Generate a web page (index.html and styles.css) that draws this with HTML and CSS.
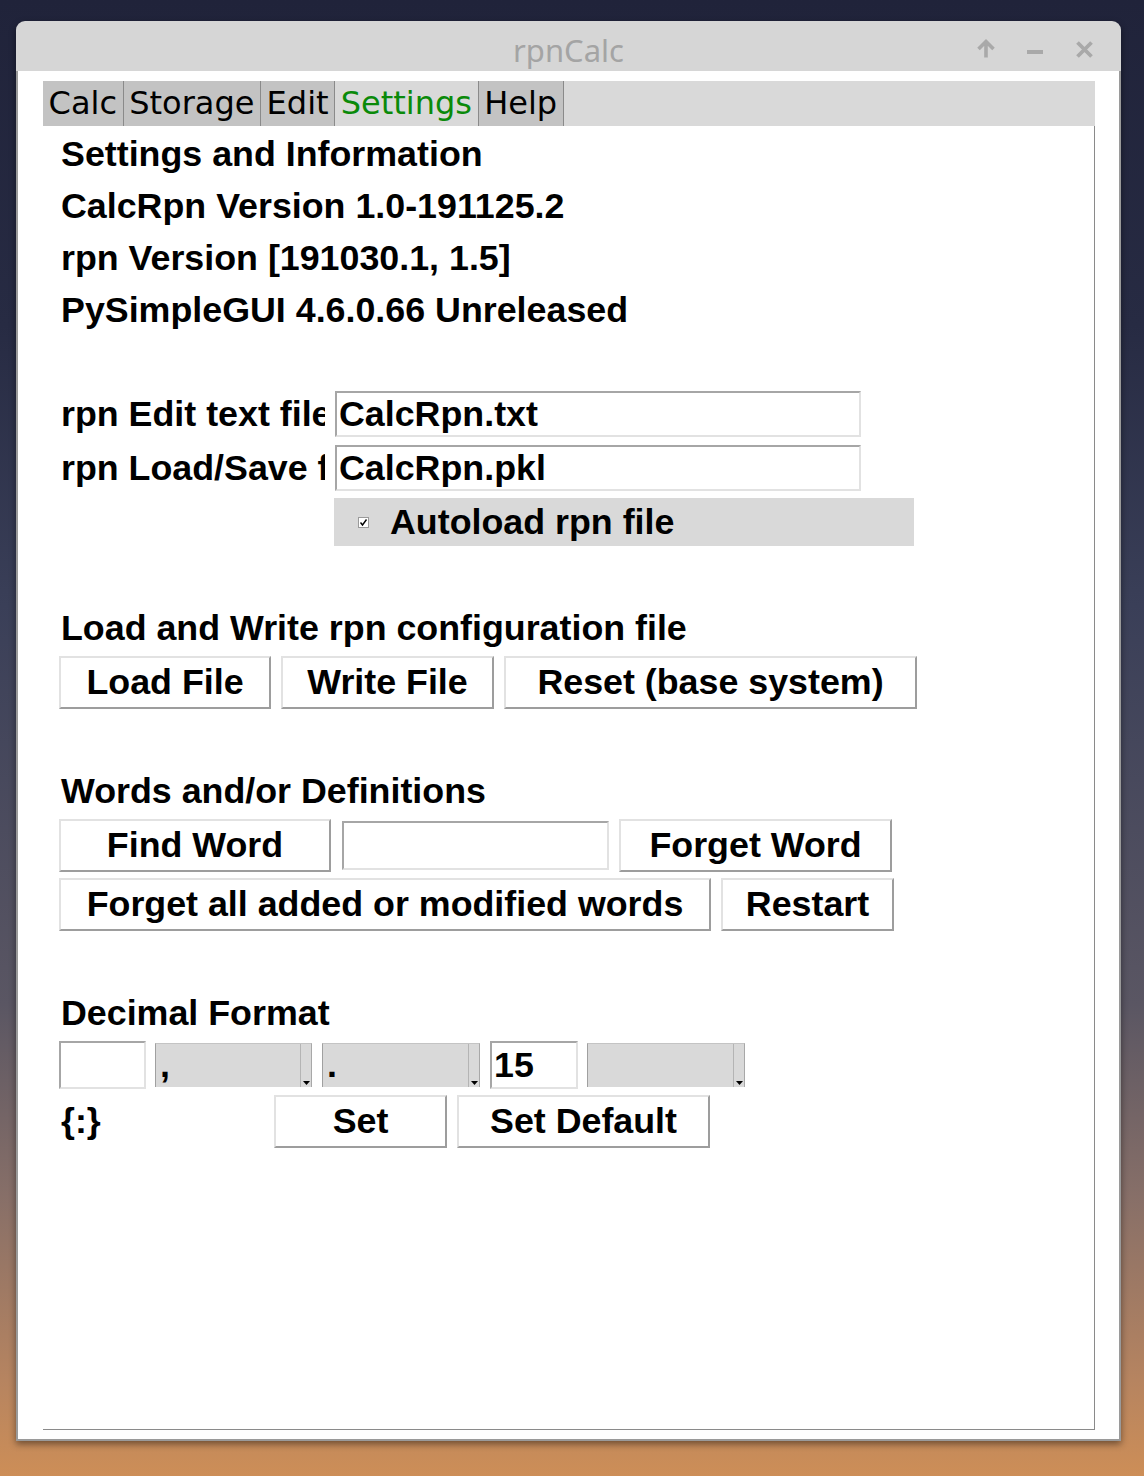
FILE: index.html
```html
<!DOCTYPE html>
<html>
<head>
<meta charset="utf-8">
<title>rpnCalc</title>
<link rel="stylesheet" href="styles.css">
</head>
<body>
<div class="window">
  <div class="titlebar">
    <div class="tb-left"></div>
    <div class="title">rpnCalc</div>
    <div class="controls">
      <span class="ctl"><svg width="49" height="50" viewBox="0 0 49 50"><path d="M25 36.5V20.5M17.5 28L25 20.5L32.5 28" fill="none" stroke="#a9a9a9" stroke-width="3.6"/></svg></span>
      <span class="ctl"><svg width="49" height="50" viewBox="0 0 49 50"><path d="M17 31H33" fill="none" stroke="#a9a9a9" stroke-width="4"/></svg></span>
      <span class="ctl"><svg width="49" height="50" viewBox="0 0 49 50"><path d="M18.5 21.5L32.5 35.5M32.5 21.5L18.5 35.5" fill="none" stroke="#a9a9a9" stroke-width="3.8"/></svg></span>
    </div>
  </div>
  <div class="client">
    <div class="tabs">
      <div class="tab">Calc</div>
      <div class="tab">Storage</div>
      <div class="tab">Edit</div>
      <div class="tab active">Settings</div>
      <div class="tab">Help</div>
    </div>
    <div class="panel">
      <div class="line">Settings and Information</div>
      <div class="line">CalcRpn Version 1.0-191125.2</div>
      <div class="line">rpn Version [191030.1, 1.5]</div>
      <div class="line">PySimpleGUI 4.6.0.66 Unreleased</div>
      <div class="spacer"></div>

      <div class="row field-row">
        <div class="flabel">rpn Edit text file</div>
        <div class="entry file-entry">CalcRpn.txt</div>
      </div>
      <div class="row field-row">
        <div class="flabel">rpn Load/Save file</div>
        <div class="entry file-entry">CalcRpn.pkl</div>
      </div>
      <div class="check-row">
        <svg class="cbox" width="11" height="11" viewBox="0 0 11 11"><rect x="0.5" y="0.5" width="10" height="10" fill="#fff" stroke="#9a9a9a"/><path d="M2.5 5.5L4.5 8L8.5 2.5" fill="none" stroke="#000" stroke-width="1.4"/></svg>
        <span class="check-text">Autoload rpn file</span>
      </div>
      <div class="spacer"></div>

      <div class="line">Load and Write rpn configuration file</div>
      <div class="row btn-row">
        <div class="btn w-load">Load File</div>
        <div class="btn w-write">Write File</div>
        <div class="btn w-reset">Reset (base system)</div>
      </div>
      <div class="spacer"></div>

      <div class="line">Words and/or Definitions</div>
      <div class="row btn-row">
        <div class="btn w-find">Find Word</div>
        <div class="entry word-entry"></div>
        <div class="btn w-forget">Forget Word</div>
      </div>
      <div class="row btn-row second">
        <div class="btn w-forgetall">Forget all added or modified words</div>
        <div class="btn w-restart">Restart</div>
      </div>
      <div class="spacer"></div>

      <div class="line">Decimal Format</div>
      <div class="row dec-row">
        <div class="entry small-entry e1"></div>
        <div class="combo c1"><span class="combo-text">,</span><span class="combo-arrow"><svg width="7" height="4" viewBox="0 0 7 4"><path d="M0 0H7L3.5 4Z" fill="#000"/></svg></span></div>
        <div class="combo c2"><span class="combo-text">.</span><span class="combo-arrow"><svg width="7" height="4" viewBox="0 0 7 4"><path d="M0 0H7L3.5 4Z" fill="#000"/></svg></span></div>
        <div class="entry small-entry e2">15</div>
        <div class="combo c3"><span class="combo-text"></span><span class="combo-arrow"><svg width="7" height="4" viewBox="0 0 7 4"><path d="M0 0H7L3.5 4Z" fill="#000"/></svg></span></div>
      </div>
      <div class="row btn-row set-row">
        <div class="fmt-label">{:}</div>
        <div class="btn w-set">Set</div>
        <div class="btn w-setdef">Set Default</div>
      </div>
    </div>
  </div>
</div>
</body>
</html>
```
FILE: styles.css
```css
html, body {
  margin: 0;
  padding: 0;
}
body {
  width: 1144px;
  height: 1476px;
  overflow: hidden;
  background: linear-gradient(to bottom,
    #20233a 0%,
    #272b43 22%,
    #3a3f58 41%,
    #5a5663 68%,
    #876f68 81%,
    #b68460 93.5%,
    #cd8e57 100%);
  font-family: "Liberation Sans", Arial, sans-serif;
}
.window {
  margin: 21px 0 0 16px;
  width: 1105px;
  height: 1420px;
  display: flex;
  flex-direction: column;
  border-radius: 9px 9px 0 0;
  box-shadow: 0 3px 7px rgba(0, 0, 0, 0.45);
}
.titlebar {
  height: 50px;
  flex: none;
  background: #d6d6d6;
  border-radius: 9px 9px 0 0;
  display: grid;
  grid-template-columns: 1fr auto 1fr;
  align-items: start;
}
.title {
  font-family: "Noto Sans", "DejaVu Sans", sans-serif;
  font-size: 31px;
  color: #a4a4a4;
  line-height: 50px;
  padding-top: 4px;
  height: 50px;
  box-sizing: border-box;
}
.controls {
  display: flex;
  justify-content: flex-end;
  padding-right: 13px;
  height: 50px;
}
.ctl {
  width: 49px;
  height: 50px;
  display: block;
}
.ctl svg {
  display: block;
}
.client {
  flex: 1;
  background: #fff;
  border: 2px solid #9a9a9a;
  border-top: none;
  padding: 10px 24px 9px 25px;
  box-sizing: border-box;
  display: flex;
  flex-direction: column;
}
.tabs {
  height: 45px;
  flex: none;
  background: #d9d9d9;
  display: flex;
  font-family: "DejaVu Sans", sans-serif;
  font-size: 32px;
}
.tab {
  padding: 0 5.6px;
  line-height: 45px;
  background: #c3c3c3;
  border-right: 1px solid #8a8a8a;
  color: #000;
}
.tab.active {
  background: #d9d9d9;
  color: #0a8a0a;
}
.panel {
  flex: 1;
  border-right: 1px solid #8a8a8a;
  border-bottom: 1px solid #8a8a8a;
  padding: 1px 0 0 16px;
  box-sizing: border-box;
  font-weight: bold;
  font-size: 35.8px;
  color: #000;
  display: flex;
  flex-direction: column;
}
.line {
  height: 52px;
  line-height: 54px;
  padding-left: 2px;
  white-space: nowrap;
}
.spacer {
  height: 52px;
  flex: none;
}
.row {
  display: flex;
  align-items: center;
  flex: none;
}
.field-row {
  margin: 4px 0;
  height: 46px;
}
.flabel {
  width: 266px;
  margin-right: 10px;
  padding-left: 2px;
  box-sizing: border-box;
  overflow: hidden;
  white-space: nowrap;
  line-height: 46px;
}
.entry {
  box-sizing: border-box;
  border: 2px solid;
  border-color: #a6a6a6 #e2e2e2 #e2e2e2 #a6a6a6;
  background: #fff;
  padding-left: 2px;
  white-space: nowrap;
  overflow: hidden;
}
.file-entry {
  width: 526px;
  height: 46px;
  line-height: 42px;
}
.check-row {
  margin: 3px 0 3px 275px;
  width: 580px;
  height: 48px;
  flex: none;
  background: #d9d9d9;
  display: flex;
  align-items: center;
  padding-left: 24px;
  box-sizing: border-box;
}
.cbox {
  display: block;
  flex: none;
}
.check-text {
  margin-left: 21px;
  line-height: 48px;
}
.btn-row {
  margin: 3px 0;
  height: 53px;
  gap: 10px;
}
.btn {
  box-sizing: border-box;
  height: 53px;
  border: 2px solid;
  border-color: #e2e2e2 #9d9d9d #9d9d9d #e2e2e2;
  background: #fff;
  text-align: center;
  line-height: 49px;
  white-space: nowrap;
}
.w-load { width: 212px; }
.w-write { width: 213px; }
.w-reset { width: 413px; }
.w-find { width: 272px; }
.w-forget { width: 273px; }
.w-forgetall { width: 652px; }
.w-restart { width: 173px; }
.w-set { width: 173px; }
.w-setdef { width: 253px; }
.word-entry {
  width: 267px;
  height: 49px;
  margin-left: 1px;
}
.dec-row {
  margin: 3px 0 0 0;
  height: 48px;
}
.small-entry {
  height: 48px;
  line-height: 44px;
}
.e1 { width: 87px; }
.e2 { width: 88px; margin-left: 10px; }
.combo {
  height: 44px;
  box-sizing: border-box;
  background: #d9d9d9;
  border-left: 1px solid #a0a0a0;
  border-top: 1px solid #c4c4c4;
  border-right: 1px solid #a8a8a8;
  display: flex;
}
.c1 { width: 157px; margin-left: 9px; }
.c2 { width: 158px; margin-left: 10px; }
.c3 { width: 158px; margin-left: 9px; }
.combo-text {
  flex: 1;
  padding-left: 4px;
  line-height: 43px;
}
.combo-arrow {
  width: 11px;
  border-left: 1px solid #b4b4b4;
  display: flex;
  align-items: flex-end;
  justify-content: center;
  padding-bottom: 2px;
  box-sizing: border-box;
}
.combo-arrow svg {
  display: block;
}
.set-row {
  margin-top: 6px;
}
.fmt-label {
  width: 205px;
  padding-left: 2px;
  box-sizing: border-box;
  line-height: 53px;
}
```
